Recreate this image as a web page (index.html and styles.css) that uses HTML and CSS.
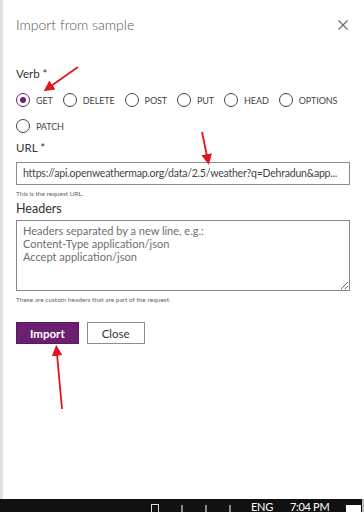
FILE: index.html
```html
<!DOCTYPE html>
<html lang="en">
<head>
    <meta charset="UTF-8">
    <meta name="viewport" content="width=device-width, initial-scale=1.0">
    <title>Import from sample</title>
    <link rel="stylesheet" href="styles.css">
</head>
<body>
    <div class="screen">
        <div class="panel">
            <header class="panel-header">
                <h1>Import from sample</h1>
                <button class="close-x" aria-label="Close">
                    <svg width="10" height="10" viewBox="0 0 10 10"><path d="M0.5 0.5L9.5 9.5M9.5 0.5L0.5 9.5" stroke="#666" stroke-width="1.1"/></svg>
                </button>
            </header>

            <div class="field">
                <label class="field-label">Verb *</label>
                <div class="verbs">
                    <span class="verb checked"><span class="radio"></span>GET</span>
                    <span class="verb"><span class="radio"></span>DELETE</span>
                    <span class="verb"><span class="radio"></span>POST</span>
                    <span class="verb"><span class="radio"></span>PUT</span>
                    <span class="verb"><span class="radio"></span>HEAD</span>
                    <span class="verb"><span class="radio"></span>OPTIONS</span>
                    <span class="verb"><span class="radio"></span>PATCH</span>
                </div>
            </div>

            <div class="field">
                <label class="field-label">URL *</label>
                <div class="url-input">https://api.openweathermap.org/data/2.5/weather?q=Dehradun&amp;app...</div>
                <div class="hint">This is the request URL.</div>
            </div>

            <div class="field">
                <label class="field-label headers-label">Headers</label>
                <textarea class="headers-input" placeholder="Headers separated by a new line, e.g.:&#10;Content-Type application/json&#10;Accept application/json"></textarea>
                <div class="hint">These are custom headers that are part of the request.</div>
            </div>

            <div class="actions">
                <button class="btn primary">Import</button>
                <button class="btn">Close</button>
            </div>
        </div>

        <div class="taskbar">
            <span class="tray-icon"></span>
            <span class="tray-mark"></span>
            <span class="tray-mark"></span>
            <span class="tray-mark"></span>
            <span class="tray-text lang">ENG</span>
            <span class="tray-text clock">7:04 PM</span>
            <span class="tray-box"></span>
        </div>

        <!-- red annotation arrows drawn on top of the screenshot -->
        <svg class="arrows" width="364" height="512" viewBox="0 0 364 512">
            <defs>
                <marker id="head" markerWidth="6" markerHeight="6" refX="1" refY="3" orient="auto" markerUnits="strokeWidth">
                    <path d="M0 0L6 3L0 6Z" fill="#e3141b"/>
                </marker>
            </defs>
            <line x1="78" y1="67" x2="51" y2="86" stroke="#e3141b" stroke-width="1.8" marker-end="url(#head)"/>
            <line x1="202" y1="132" x2="207" y2="156" stroke="#e3141b" stroke-width="1.8" marker-end="url(#head)"/>
            <line x1="62" y1="409" x2="57" y2="354" stroke="#e3141b" stroke-width="1.8" marker-end="url(#head)"/>
        </svg>
    </div>
</body>
</html>
```

FILE: styles.css
```css
body {
    margin: 0;
    font-family: "Segoe UI", Lato, "Open Sans", Arial, sans-serif;
    color: #333;
    background-color: #fff;
}
.screen {
    position: relative;
    width: 364px;
    height: 512px;
    display: flex;
    flex-direction: column;
    overflow: hidden;
}
.panel {
    flex: 1;
    border-left: 3px solid #e2e2e2;
    padding: 0 14px 0 13px;
}
.panel-header {
    display: flex;
    justify-content: space-between;
    align-items: center;
    padding-top: 15px;
    margin-bottom: 32px;
}
h1 {
    margin: 0;
    font-size: 14px;
    font-weight: 300;
    line-height: 20px;
    color: #555;
}
.close-x {
    border: none;
    background: none;
    padding: 0;
    margin-right: 2px;
    display: flex;
}
.field-label {
    display: block;
    font-size: 11.5px;
    line-height: 14px;
    color: #333;
}
.verbs {
    display: flex;
    flex-wrap: wrap;
    column-gap: 10px;
    margin-top: 6px;
}
.verb {
    display: flex;
    align-items: center;
    height: 26px;
    font-size: 9px;
    color: #444;
    letter-spacing: -0.1px;
}
.radio {
    width: 12px;
    height: 12px;
    border: 1px solid #444;
    border-radius: 50%;
    margin-right: 6px;
    display: flex;
    align-items: center;
    justify-content: center;
}
.verb.checked .radio {
    border-color: #6b2070;
}
.verb.checked .radio::after {
    content: "";
    width: 6px;
    height: 6px;
    border-radius: 50%;
    background-color: #6b2070;
}
.field {
    margin-bottom: 2px;
}
.url-input {
    margin-top: 7px;
    height: 21px;
    border: 1px solid #8c8c8c;
    padding: 0 6px;
    font-size: 10.5px;
    letter-spacing: -0.22px;
    line-height: 21px;
    color: #444;
    white-space: nowrap;
    overflow: hidden;
    text-overflow: ellipsis;
}
.hint {
    margin-top: 4px;
    font-size: 6.5px;
    line-height: 9px;
    color: #666;
}
.headers-label {
    font-size: 12.5px;
    line-height: 16px;
    margin-top: 3px;
}
.headers-input {
    display: block;
    box-sizing: border-box;
    width: 100%;
    height: 71px;
    margin: 3px 0 0;
    border: 1px solid #8d7f96;
    border-radius: 0;
    padding: 3px 6px;
    font-family: inherit;
    font-size: 11px;
    line-height: 13px;
    color: #444;
}
.headers-input::placeholder {
    color: #6e6e6e;
}
.actions {
    display: flex;
    gap: 8px;
    margin-top: 18px;
}
.btn {
    height: 22px;
    padding: 0 14px;
    font-family: inherit;
    font-size: 11.5px;
    color: #333;
    background-color: #fff;
    border: 1px solid #8c8c8c;
}
.btn.primary {
    padding: 0 13px;
    background-color: #6b1f71;
    border-color: #5a1860;
    color: #fff;
    font-weight: 700;
}
.taskbar {
    height: 13px;
    background-color: #111;
    display: flex;
    align-items: flex-start;
    box-sizing: border-box;
    overflow: hidden;
    border-right: 2px solid #bbb;
    white-space: nowrap;
}
.taskbar span {
    flex-shrink: 0;
}
.tray-icon {
    width: 6px;
    height: 10px;
    border: 1px solid #ddd;
    margin: 5px 0 0 151px;
}
.tray-mark {
    width: 2px;
    height: 8px;
    background-color: #888;
    margin: 6px 0 0 22px;
}
.tray-text {
    color: #fff;
    font-size: 11px;
    line-height: 14px;
    margin-top: 1px;
    letter-spacing: -0.3px;
}
.lang {
    margin-left: 20px;
}
.clock {
    margin-left: 17px;
}
.tray-box {
    width: 15px;
    height: 10px;
    background-color: #fff;
    margin: 6px 0 0 17px;
}
.arrows {
    position: absolute;
    left: 0;
    top: 0;
    pointer-events: none;
}
```
